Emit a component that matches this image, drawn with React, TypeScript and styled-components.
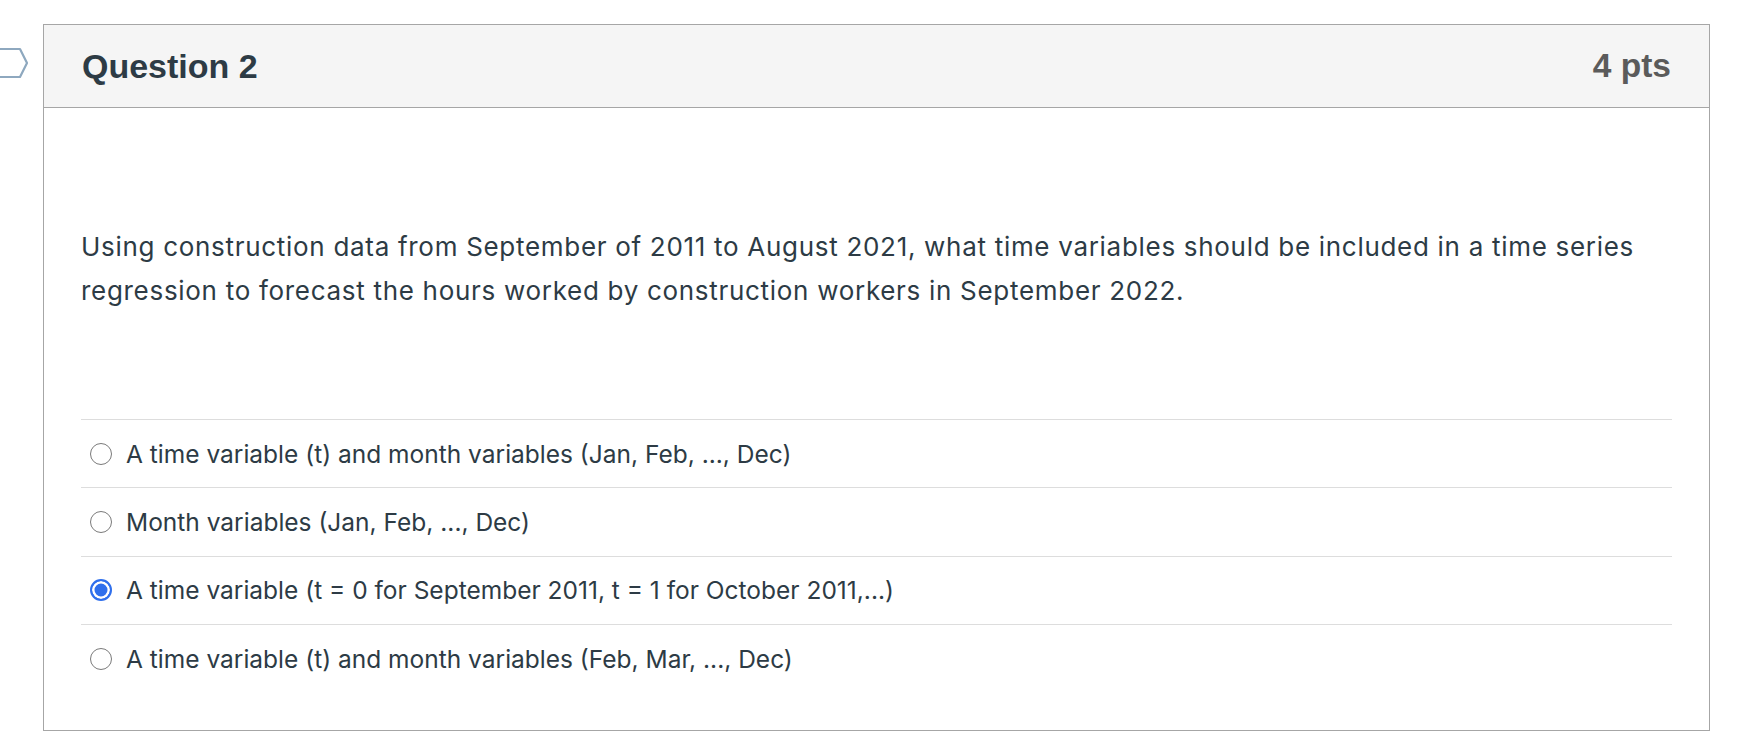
import styled, { createGlobalStyle } from "styled-components";

const GlobalStyle = createGlobalStyle`
  body {
    margin: 0;
    background: #ffffff;
    font-family: "Inter", "Liberation Sans", sans-serif;
    color: #2d3b45;
  }
`;

const answers = [
  { text: "A time variable (t) and month variables (Jan, Feb, ..., Dec)", checked: false },
  { text: "Month variables (Jan, Feb, ..., Dec)", checked: false },
  { text: "A time variable (t = 0 for September 2011, t = 1 for October 2011,...)", checked: true },
  { text: "A time variable (t) and month variables (Feb, Mar, ..., Dec)", checked: false },
];

const App = () => {
  return (
    <Page>
      <GlobalStyle />
      <Marker width="30" height="32" viewBox="0 0 30 32">
        <path
          d="M-4 2 L20 2 L27 16 L20 30 L-4 30"
          fill="none"
          stroke="#8ea8bf"
          strokeWidth="2.2"
          strokeLinejoin="round"
        />
      </Marker>
      <Card>
        <Header>
          <Title>Question 2</Title>
          <Points>4 pts</Points>
        </Header>
        <Body>
          <QuestionText>
            Using construction data from September of 2011 to August 2021, what time variables should be
            included in a time series regression to forecast the hours worked by construction workers in
            September 2022.
          </QuestionText>
          <Answers>
            {answers.map((a) => (
              <Answer key={a.text}>
                <Radio checked={a.checked} />
                <AnswerLabel>{a.text}</AnswerLabel>
              </Answer>
            ))}
          </Answers>
        </Body>
      </Card>
    </Page>
  );
};

export default App;

const Page = styled.div`
  position: relative;
  padding: 24px 0 0 43px;
`;

const Marker = styled.svg`
  position: absolute;
  left: 0;
  top: 47px;
  overflow: visible;
`;

const Card = styled.div`
  width: 1665px;
  border: 1px solid #a6a6a6;
  background: #ffffff;
`;

const Header = styled.div`
  height: 82px;
  background: #f5f5f5;
  border-bottom: 1px solid #a6a6a6;
  display: flex;
  align-items: center;
  justify-content: space-between;
  padding: 0 38px 0 38px;
`;

const Title = styled.div`
  font-family: "Liberation Sans", Arial, sans-serif;
  font-size: 34px;
  font-weight: 700;
  color: #2d3b45;
`;

const Points = styled.div`
  font-family: "Liberation Sans", Arial, sans-serif;
  font-size: 33.5px;
  font-weight: 700;
  color: #5b5b5b;
`;

const Body = styled.div`
  padding: 117px 37px 37px 37px;
`;

const QuestionText = styled.p`
  margin: 0 0 107px 0;
  font-size: 26px;
  letter-spacing: 0.7px;
  line-height: 43.5px;
  color: #2d3b45;
`;

const Answers = styled.div`
  display: flex;
  flex-direction: column;
`;

const Answer = styled.div`
  height: 67.4px;
  border-top: 1px solid #dddddd;
  display: flex;
  align-items: center;
  padding-left: 9px;
  gap: 14px;
`;

const Radio = styled.span<{ checked: boolean }>`
  box-sizing: border-box;
  width: 22px;
  height: 22px;
  border-radius: 50%;
  flex-shrink: 0;
  background: ${(p) => (p.checked ? "#2f6fec" : "#ffffff")};
  border: ${(p) => (p.checked ? "2px solid #2f6fec" : "1.6px solid #7a7a7a")};
  box-shadow: ${(p) => (p.checked ? "inset 0 0 0 2.5px #ffffff" : "none")};
`;

const AnswerLabel = styled.span`
  font-size: 24.5px;
  color: #2d3b45;
`;
